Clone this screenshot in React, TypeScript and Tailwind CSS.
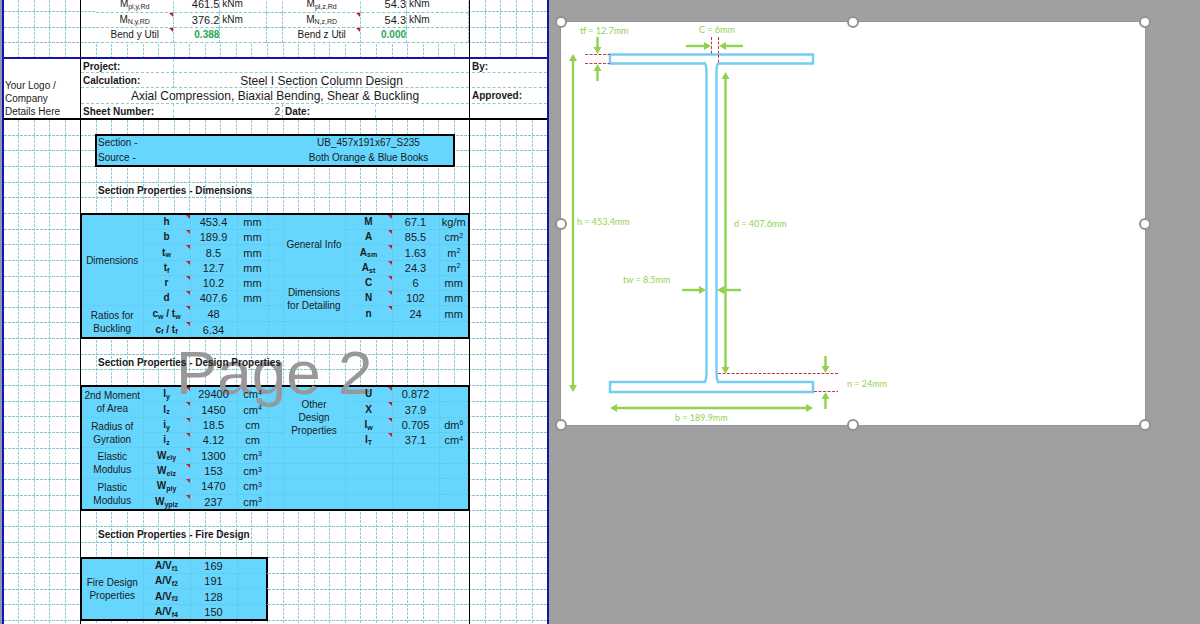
import { ReactNode } from "react";

type Row = {
    symbol?: ReactNode;
    value?: string;
    unit?: ReactNode;
    label?: string[];
    span?: number;
};

const cm = (power: number) => (
    <>
        cm<sup>{power}</sup>
    </>
);

const sub = (base: string, index: string) => (
    <>
        {base}
        <sub>{index}</sub>
    </>
);

const dimensionsLeft: Row[] = [
    { label: ["Dimensions"], span: 6, symbol: "h", value: "453.4", unit: "mm" },
    { symbol: "b", value: "189.9", unit: "mm" },
    { symbol: sub("t", "w"), value: "8.5", unit: "mm" },
    { symbol: sub("t", "f"), value: "12.7", unit: "mm" },
    { symbol: "r", value: "10.2", unit: "mm" },
    { symbol: "d", value: "407.6", unit: "mm" },
    { label: ["Ratios for", "Buckling"], span: 2, symbol: <>{sub("c", "w")} / {sub("t", "w")}</>, value: "48" },
    { symbol: <>{sub("c", "f")} / {sub("t", "f")}</>, value: "6.34" },
];

const dimensionsRight: Row[] = [
    { label: ["General Info"], span: 4, symbol: "M", value: "67.1", unit: "kg/m" },
    { symbol: "A", value: "85.5", unit: cm(2) },
    { symbol: sub("A", "sm"), value: "1.63", unit: <>m<sup>2</sup></> },
    { symbol: sub("A", "st"), value: "24.3", unit: <>m<sup>2</sup></> },
    { label: ["Dimensions", "for Detailing"], span: 3, symbol: "C", value: "6", unit: "mm" },
    { symbol: "N", value: "102", unit: "mm" },
    { symbol: "n", value: "24", unit: "mm" },
    { label: [], span: 1 },
];

const designLeft: Row[] = [
    { label: ["2nd Moment", "of Area"], span: 2, symbol: sub("I", "y"), value: "29400", unit: cm(4) },
    { symbol: sub("I", "z"), value: "1450", unit: cm(4) },
    { label: ["Radius of", "Gyration"], span: 2, symbol: sub("i", "y"), value: "18.5", unit: "cm" },
    { symbol: sub("i", "z"), value: "4.12", unit: "cm" },
    { label: ["Elastic", "Modulus"], span: 2, symbol: sub("W", "ely"), value: "1300", unit: cm(3) },
    { symbol: sub("W", "elz"), value: "153", unit: cm(3) },
    { label: ["Plastic", "Modulus"], span: 2, symbol: sub("W", "ply"), value: "1470", unit: cm(3) },
    { symbol: sub("W", "yplz"), value: "237", unit: cm(3) },
];

const designRight: Row[] = [
    { label: ["Other", "Design", "Properties"], span: 4, symbol: "U", value: "0.872" },
    { symbol: "X", value: "37.9" },
    { symbol: sub("I", "w"), value: "0.705", unit: <>dm<sup>6</sup></> },
    { symbol: sub("I", "T"), value: "37.1", unit: cm(4) },
    { label: [], span: 1 },
    { label: [], span: 1 },
    { label: [], span: 1 },
    { label: [], span: 1 },
];

const fireDesign: Row[] = [
    { label: ["Fire Design", "Properties"], span: 4, symbol: sub("A/V", "f1"), value: "169" },
    { symbol: sub("A/V", "f2"), value: "191" },
    { symbol: sub("A/V", "f3"), value: "128" },
    { symbol: sub("A/V", "f4"), value: "150" },
];

const bending = [
    { y: sub("M", "pl,y,Rd"), yValue: "461.5", z: sub("M", "pl,z,Rd"), zValue: "54.3", unit: "kNm", note: false },
    { y: sub("M", "N,y,RD"), yValue: "376.2", z: sub("M", "N,z,RD"), zValue: "54.3", unit: "kNm", note: true },
    { y: "Bend y Util", yValue: "0.388", z: "Bend z Util", zValue: "0.000", unit: "", note: true },
];

// Dashed calculation paper, lines start at the given row offset
function GridPaper({ top }: { top: number }) {
    const columns = Array.from({ length: 35 }, (_, i) => Math.round(76.3 + (i - 4) * 15.56) + 0.5);
    const rows = Array.from({ length: 60 }, (_, i) => Math.round(top + i * 15.65) + 0.5);

    return (
        <svg className="absolute inset-0 h-full w-full" aria-hidden="true">
            {columns.map((x) => (
                <line key={x} x1={x} x2={x} y1={0} y2="100%" stroke="#93cfda" strokeDasharray="3 1" />
            ))}
            {rows.map((y) => (
                <line key={y} x1={0} x2="100%" y1={y} y2={y} stroke="#86c6d1" strokeDasharray="3 1" />
            ))}
        </svg>
    );
}

function NoteMarker() {
    return (
        <svg className="absolute top-0 right-0 h-1 w-1" viewBox="0 0 4 4" aria-hidden="true">
            <path d="M0 0H4V4Z" fill="#d8142c" />
        </svg>
    );
}

function RowCells({ row, notes }: { row: Row; notes: boolean }) {
    const cell = "border border-dotted border-[#5cc6e6] p-0";

    return (
        <>
            {row.label && (
                <th rowSpan={row.span} className={`${cell} text-[10px] leading-[13px] font-normal`}>
                    {row.label.map((line) => (
                        <div key={line}>{line}</div>
                    ))}
                </th>
            )}
            <td className={`${cell} relative text-[10px] font-bold`}>
                {row.symbol}
                {notes && row.symbol && <NoteMarker />}
            </td>
            <td className={cell}>{row.value}</td>
            <td className={`${cell} whitespace-nowrap`}>{row.unit}</td>
        </>
    );
}

function PropertyTable({ left, right, notes = true }: { left: Row[]; right?: Row[]; notes?: boolean }) {
    return (
        <table className="relative z-20 h-full w-full table-fixed border-collapse border-hidden text-center text-[11px] leading-3 [&_sub]:text-[7px] [&_sup]:text-[7px]">
            <colgroup>
                <col className="w-[61px]" />
                <col className="w-[47px]" />
                <col className="w-[47px]" />
                <col className="w-[31px]" />
                {right && (
                    <>
                        <col className="w-[15px]" />
                        <col className="w-[62px]" />
                        <col className="w-[47px]" />
                        <col className="w-[47px]" />
                        <col className="w-[29px]" />
                    </>
                )}
            </colgroup>
            <tbody>
                {left.map((row, index) => (
                    <tr key={index}>
                        <RowCells row={row} notes={notes} />
                        {right && (
                            <>
                                <td className="border border-dotted border-[#5cc6e6] p-0" />
                                <RowCells row={right[index]} notes={notes} />
                            </>
                        )}
                    </tr>
                ))}
            </tbody>
        </table>
    );
}

function SectionTitle({ children }: { children: ReactNode }) {
    return (
        <h2 className="relative z-20 flex h-[46px] items-center pl-[18px] text-[10px] font-bold">
            {children}
        </h2>
    );
}

function BendingResults() {
    return (
        <div className="relative h-[59px] overflow-hidden border-b-2 border-[#1414a8]">
            <GridPaper top={11} />
            <div className="relative ml-[76px] -mt-[3px] h-[62px] w-[390px] border-x border-black">
                <table className="ml-[15px] table-fixed border-collapse bg-white text-[11px] leading-3 [&_sub]:text-[7px]">
                    <colgroup>
                        <col className="w-[78px]" />
                        <col className="w-[46px]" />
                        <col className="w-[47px]" />
                        <col className="w-4" />
                        <col className="w-[78px]" />
                        <col className="w-[46px]" />
                        <col className="w-[62px]" />
                    </colgroup>
                    <tbody>
                        {bending.map((row, index) => (
                            <tr key={index} className="h-[15px] border-b border-dashed border-[#86c6d1] *:border-r *:border-dashed *:border-[#93cfda] *:p-0">
                                <td className="relative text-center text-[10px]">
                                    {row.y}
                                    {row.note && <NoteMarker />}
                                </td>
                                <td className={`text-right ${row.unit ? "" : "text-[10px] font-bold text-[#1faa55]"}`}>{row.yValue}</td>
                                <td className="text-[10px]">
                                    <span className="pl-0.5">{row.unit}</span>
                                </td>
                                <td />
                                <td className="relative text-center text-[10px]">
                                    {row.z}
                                    {row.note && <NoteMarker />}
                                </td>
                                <td className={`text-right ${row.unit ? "" : "text-[10px] font-bold text-[#1faa55]"}`}>{row.zValue}</td>
                                <td className="text-[10px]">
                                    <span className="pl-0.5">{row.unit}</span>
                                </td>
                            </tr>
                        ))}
                    </tbody>
                </table>
            </div>
        </div>
    );
}

function SheetHeader() {
    const line = "border-b border-dashed border-[#8fcad5]";
    const divider = "border-r border-dashed border-[#8fcad5]";

    return (
        <header className="flex h-[61px] border-b-2 border-black bg-white text-[10px] leading-4">
            <div className="flex w-[76px] flex-col justify-end pl-px leading-[13px]">
                <div>Your Logo /</div>
                <div>Company</div>
                <div>Details Here</div>
            </div>
            <div className="grid w-[390px] grid-cols-[93px_109px_93px_93px] grid-rows-[14px_15px_16px_14px] border-x border-black">
                <div className={`${line} ${divider} pl-0.5 font-bold`}>Project:</div>
                <div className={`${line} col-span-3`} />
                <div className={`${line} ${divider} pl-0.5 font-bold`}>Calculation:</div>
                <h1 className={`${line} col-span-3 text-center text-xs leading-4`}>Steel I Section Column Design</h1>
                <div className={`${line} col-span-4 text-center text-xs leading-4`}>
                    Axial Compression, Biaxial Bending, Shear &amp; Buckling
                </div>
                <div className={`${divider} pl-0.5 font-bold`}>Sheet Number:</div>
                <div className={`${divider} pr-0.5 text-right`}>2</div>
                <div className={`${divider} pl-0.5 font-bold`}>Date:</div>
                <div />
            </div>
            <div className="grid flex-1 grid-rows-[14px_15px_16px_14px] pl-0.5 font-bold">
                <div className={line}>By:</div>
                <div className={line} />
                <div className={line}>Approved:</div>
                <div />
            </div>
        </header>
    );
}

function Sheet() {
    return (
        <main className="flex w-[549px] shrink-0 flex-col bg-[#8f97b8] pl-0.5">
            <div className="flex flex-1 flex-col border-x-2 border-[#1414a8] bg-white text-[#1a1a1a]">
                <BendingResults />
                <SheetHeader />
                <div className="relative flex-1 pb-1">
                    <GridPaper top={-1} />
                    <div className="absolute top-0 bottom-0 left-[76px] w-[390px] border-x border-black" />
                    <div className="relative ml-[76px] w-[390px] pt-[14px]">
                        <dl className="mx-[15px] grid h-[33px] grid-cols-[186px_1fr] grid-rows-2 items-center border-2 border-black bg-[#66d6ff] pl-px text-[10px] leading-3">
                            <dt>Section -</dt>
                            <dd className="text-center">UB_457x191x67_S235</dd>
                            <dt>Source -</dt>
                            <dd className="text-center">Both Orange &amp; Blue Books</dd>
                        </dl>

                        <SectionTitle>Section Properties - Dimensions</SectionTitle>
                        <div className="h-[126px] border-2 border-black bg-[#66d6ff]">
                            <PropertyTable left={dimensionsLeft} right={dimensionsRight} />
                        </div>

                        <SectionTitle>Section Properties - Design Properties</SectionTitle>
                        <div className="h-[126px] border-2 border-black bg-[#66d6ff]">
                            <PropertyTable left={designLeft} right={designRight} />
                        </div>

                        <SectionTitle>Section Properties - Fire Design</SectionTitle>
                        <div className="h-16 w-[188px] border-2 border-black bg-[#66d6ff]">
                            <PropertyTable left={fireDesign} notes={false} />
                        </div>

                        {/* Print preview page number */}
                        <div className="pointer-events-none absolute top-[218px] left-24 z-10 text-[62px] leading-[70px] whitespace-nowrap text-[#989898]">
                            Page 2
                        </div>
                    </div>
                </div>
            </div>
        </main>
    );
}

function Arrow({ x1, y1, x2, y2, both = false }: { x1: number; y1: number; x2: number; y2: number; both?: boolean }) {
    const length = Math.hypot(x2 - x1, y2 - y1);
    const ux = (x2 - x1) / length;
    const uy = (y2 - y1) / length;
    const head = (x: number, y: number, dir: number) =>
        `M${x} ${y}L${x - ux * 7 * dir - uy * 4} ${y - uy * 7 * dir + ux * 4}L${x - ux * 7 * dir + uy * 4} ${y - uy * 7 * dir - ux * 4}Z`;

    return (
        <g fill="#92d050" stroke="none">
            <line
                x1={both ? x1 + ux * 5 : x1}
                y1={both ? y1 + uy * 5 : y1}
                x2={x2 - ux * 5}
                y2={y2 - uy * 5}
                stroke="#92d050"
                strokeWidth={2.4}
            />
            <path d={head(x2, y2, 1)} />
            {both && <path d={head(x1, y1, -1)} />}
        </g>
    );
}

function SectionDrawing() {
    return (
        <svg width="360" height="403" viewBox="561 22 360 403" role="img" aria-label="I section dimensions">
            <path
                d="M610 54.5H813V63.5H718Q716.5 66 716.5 72V374Q716.5 379 718 382H813V392H610V382H705Q706.5 379 706.5 374V72Q706.5 66 705 63.5H610Z"
                fill="none"
                stroke="#74cdf0"
                strokeWidth="2.4"
            />
            <g stroke="#c0394b" strokeWidth="1" strokeDasharray="3 1.5">
                <path d="M585 54.5H610M585 63.5H610M711.5 37V54M718.5 37V63M718 373.5H838M814 391.5H838" />
            </g>
            <Arrow x1={573} y1={54} x2={573} y2={392} both />
            <Arrow x1={725.5} y1={72} x2={725.5} y2={374} both />
            <Arrow x1={610} y1={408} x2={813} y2={408} both />
            <Arrow x1={597.5} y1={37} x2={597.5} y2={54} />
            <Arrow x1={597.5} y1={81} x2={597.5} y2={64} />
            <Arrow x1={686} y1={46} x2={711} y2={46} />
            <Arrow x1={743} y1={46} x2={719} y2={46} />
            <Arrow x1={682} y1={290} x2={706} y2={290} />
            <Arrow x1={741} y1={290} x2={717} y2={290} />
            <Arrow x1={825.5} y1={356} x2={825.5} y2={373} />
            <Arrow x1={825.5} y1={409} x2={825.5} y2={392} />
            <g fill="#92d050" className="font-['Lato',sans-serif] text-[9px]">
                <text x="580" y="34">tf = 12.7mm</text>
                <text x="699" y="33">C = 6mm</text>
                <text x="577" y="225">h = 453.4mm</text>
                <text x="734" y="227">d = 407.6mm</text>
                <text x="623" y="283">tw = 8.5mm</text>
                <text x="847" y="387">n = 24mm</text>
                <text x="675" y="421">b = 189.9mm</text>
            </g>
        </svg>
    );
}

const handles = [
    "top-0 left-0",
    "top-0 left-1/2",
    "top-0 left-full",
    "top-1/2 left-0",
    "top-1/2 left-full",
    "top-full left-0",
    "top-full left-1/2",
    "top-full left-full",
];

export default function App() {
    return (
        <div className="flex min-h-screen bg-[#a0a0a0] font-['Liberation_Sans',Arial,sans-serif]">
            <Sheet />
            <section className="min-w-0 flex-1 pt-[22px] pr-[55px] pl-3">
                <figure className="relative bg-white shadow-[0_0_0_1px_#969696]">
                    <SectionDrawing />
                    {handles.map((position) => (
                        <span
                            key={position}
                            className={`absolute h-3 w-3 -translate-x-1/2 -translate-y-1/2 rounded-full border-2 border-[#929292] bg-white ${position}`}
                        />
                    ))}
                </figure>
            </section>
        </div>
    );
}
